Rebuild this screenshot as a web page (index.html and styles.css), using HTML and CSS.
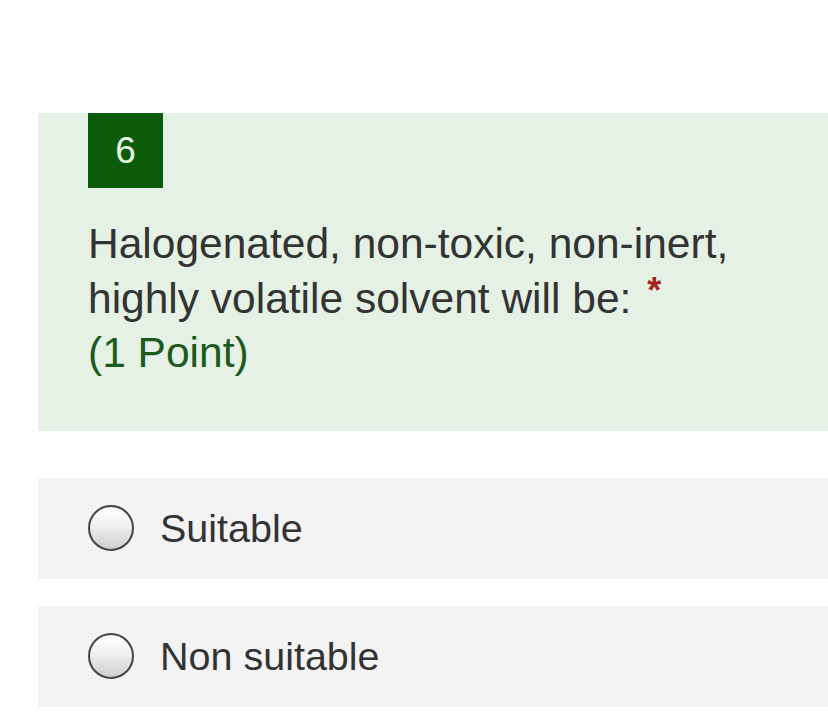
FILE: index.html
```html
<!DOCTYPE html>
<html>
<head>
<meta charset="utf-8">
<link rel="stylesheet" href="styles.css">
</head>
<body>
<div class="form">
  <section class="question">
    <div class="badge">6</div>
    <div class="qtext">
      Halogenated, non-toxic, non-inert,<br>
      highly volatile solvent will be: <span class="req">*</span><br>
      <span class="points">(1 Point)</span>
    </div>
  </section>
  <div class="options">
    <label class="option"><span class="radio"></span><span class="otext">Suitable</span></label>
    <label class="option"><span class="radio"></span><span class="otext">Non suitable</span></label>
  </div>
</div>
</body>
</html>
```
FILE: styles.css
```css
html, body {
  margin: 0;
  padding: 0;
  background: #ffffff;
}
body {
  font-family: "Liberation Sans", Arial, sans-serif;
  color: #333333;
  width: 828px;
  height: 717px;
  overflow: hidden;
}
.form {
  padding-top: 113px;
  margin-left: 38px;
}
.question {
  background: #e4f1e4;
  padding: 0 0 50px 50px;
}
.badge {
  width: 75px;
  height: 75px;
  background: #0b5b0b;
  color: #e6f4e6;
  font-size: 37px;
  display: flex;
  align-items: center;
  justify-content: center;
}
.qtext {
  margin-top: 29px;
  font-size: 42.5px;
  line-height: 54.5px;
  color: #333333;
}
.req {
  color: #a0281a;
  font-size: 36px;
  font-weight: bold;
  line-height: 0;
  vertical-align: 10px;
  margin-left: 4px;
}
.points {
  color: #1d5a1d;
}
.options {
  margin-top: 47px;
  display: flex;
  flex-direction: column;
  gap: 27px;
}
.option {
  height: 101px;
  background: #f3f3f3;
  display: flex;
  align-items: center;
  padding-left: 50px;
  gap: 26px;
}
.radio {
  width: 42px;
  height: 42px;
  border: 2px solid #444444;
  border-radius: 50%;
  background: linear-gradient(to bottom, #ffffff 0%, #f2f2f2 40%, #cfcfcf 100%);
  flex: none;
}
.otext {
  font-size: 39.5px;
  color: #333333;
}
```
